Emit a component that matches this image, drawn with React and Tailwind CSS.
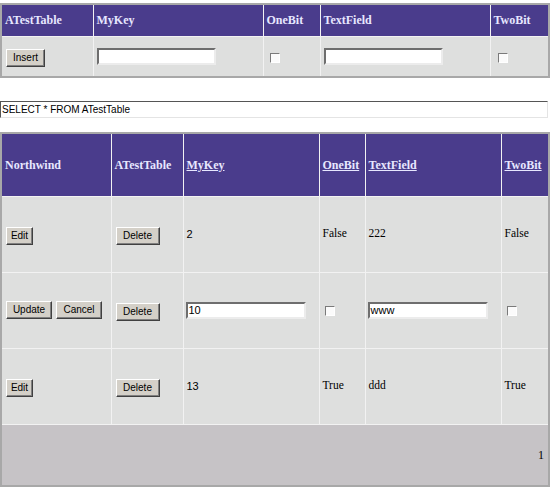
import React from "react";

const serif = { fontFamily: '"Liberation Serif", "Times New Roman", serif' };
const sans = { fontFamily: '"Liberation Sans", Arial, sans-serif' };

const Btn = ({ children, className = "" }) => (
  <button
    type="button"
    style={sans}
    className={`h-[18px] px-[5px] text-[10px] leading-none text-black bg-[#d4d0c8] border border-t-white border-l-white border-r-[#404040] border-b-[#404040] shadow-[inset_-1px_-1px_0_#808080] ${className}`}
  >
    {children}
  </button>
);

const TextBox = ({ value = "", className = "" }) => (
  <div
    style={sans}
    className={`h-[17px] bg-white border-2 border-t-[#6e6e6e] border-l-[#6e6e6e] border-r-[#ececec] border-b-[#ececec] text-[11px] leading-[13px] pl-[1px] text-black ${className}`}
  >
    {value}
  </div>
);

const Check = () => (
  <span className="inline-block w-[10px] h-[10px] bg-[#fbfbfb] border border-t-[#7a7a7a] border-l-[#7a7a7a] border-r-white border-b-white align-middle" />
);

const th = "text-left align-middle font-bold text-[12px] text-[#e7e7ff] px-[3px] border border-[#f2f2f2]";
const td = "align-middle px-[3px] border border-[#f2f2f2] text-black";

export default function App() {
  const rows = [
    { key: "2", one: "False", text: "222", two: "False" },
    { edit: true, key: "10", text: "www" },
    { key: "13", one: "True", text: "ddd", two: "True" },
  ];

  return (
    <div className="w-[550px] h-[490px] bg-white overflow-hidden">
      {/* insert grid */}
      <table className="mt-[3px] w-[548px] table-fixed border-collapse border-2 border-[#a8a8a8]" style={serif}>
        <colgroup>
          <col className="w-[92px]" />
          <col className="w-[170px]" />
          <col className="w-[57px]" />
          <col className="w-[170px]" />
          <col className="w-[59px]" />
        </colgroup>
        <thead>
          <tr className="h-[32px] bg-[#4a3c8c]">
            <th className={th}>ATestTable</th>
            <th className={th}>MyKey</th>
            <th className={th}>OneBit</th>
            <th className={th}>TextField</th>
            <th className={th}>TwoBit</th>
          </tr>
        </thead>
        <tbody>
          <tr className="h-[41px] bg-[#dedfde]">
            <td className={td}>
              <Btn className="ml-[1px] px-[6px]">Insert</Btn>
            </td>
            <td className={td}>
              <TextBox className="w-[119px]" />
            </td>
            <td className={td}>
              <span className="pl-[3px]"><Check /></span>
            </td>
            <td className={td}>
              <TextBox className="w-[119px]" />
            </td>
            <td className={td}>
              <span className="pl-[4px]"><Check /></span>
            </td>
          </tr>
        </tbody>
      </table>

      {/* sql text */}
      <div
        style={sans}
        className="mt-[23px] w-[548px] h-[17px] bg-white border border-t-[#555] border-l-[#555] border-r-[#e4e4e4] border-b-[#e4e4e4] text-[10px] leading-[15px] pl-[1px] text-black"
      >
        SELECT * FROM ATestTable
      </div>

      {/* data grid */}
      <table className="mt-[14px] w-[548px] table-fixed border-collapse border-2 border-[#a8a8a8]" style={serif}>
        <colgroup>
          <col className="w-[110px]" />
          <col className="w-[72px]" />
          <col className="w-[136px]" />
          <col className="w-[46px]" />
          <col className="w-[136px]" />
          <col className="w-[48px]" />
        </colgroup>
        <thead>
          <tr className="h-[63px] bg-[#4a3c8c]">
            <th className={th}>Northwind</th>
            <th className={th}>ATestTable</th>
            <th className={th}><a className="underline">MyKey</a></th>
            <th className={th}><a className="underline">OneBit</a></th>
            <th className={th}><a className="underline">TextField</a></th>
            <th className={th}><a className="underline">TwoBit</a></th>
          </tr>
        </thead>
        <tbody>
          {rows.map((r, i) =>
            r.edit ? (
              <tr key={i} className="h-[76px] bg-[#dedfde]">
                <td className={td}>
                  <div className="flex gap-[4px] pl-[1px]">
                    <Btn className="w-[46px]">Update</Btn>
                    <Btn className="w-[46px]">Cancel</Btn>
                  </div>
                </td>
                <td className={td}>
                  <Btn className="w-[44px] ml-[1px]">Delete</Btn>
                </td>
                <td className={td}>
                  <TextBox value={r.key} className="w-[120px] -ml-[1px]" />
                </td>
                <td className={td}>
                  <span className="pl-[2px]"><Check /></span>
                </td>
                <td className={td}>
                  <TextBox value={r.text} className="w-[120px] -ml-[1px]" />
                </td>
                <td className={td}>
                  <span className="pl-[2px]"><Check /></span>
                </td>
              </tr>
            ) : (
              <tr key={i} className="h-[76px] bg-[#dedfde]">
                <td className={td}>
                  <Btn className="w-[27px] pl-[3px] pr-[3px] ml-[1px]">Edit</Btn>
                </td>
                <td className={td}>
                  <Btn className="w-[44px] ml-[1px]">Delete</Btn>
                </td>
                <td className={`${td} text-[11px]`} style={sans}>{r.key}</td>
                <td className={`${td} text-[11.5px]`}>{r.one}</td>
                <td className={`${td} text-[11.5px]`}>{r.text}</td>
                <td className={`${td} text-[11.5px]`}>{r.two}</td>
              </tr>
            )
          )}
          <tr className="h-[62px] bg-[#c6c3c6]">
            <td colSpan={6} className={`${td} text-right text-[12px] pr-[4px]`}>
              1
            </td>
          </tr>
        </tbody>
      </table>
    </div>
  );
}
